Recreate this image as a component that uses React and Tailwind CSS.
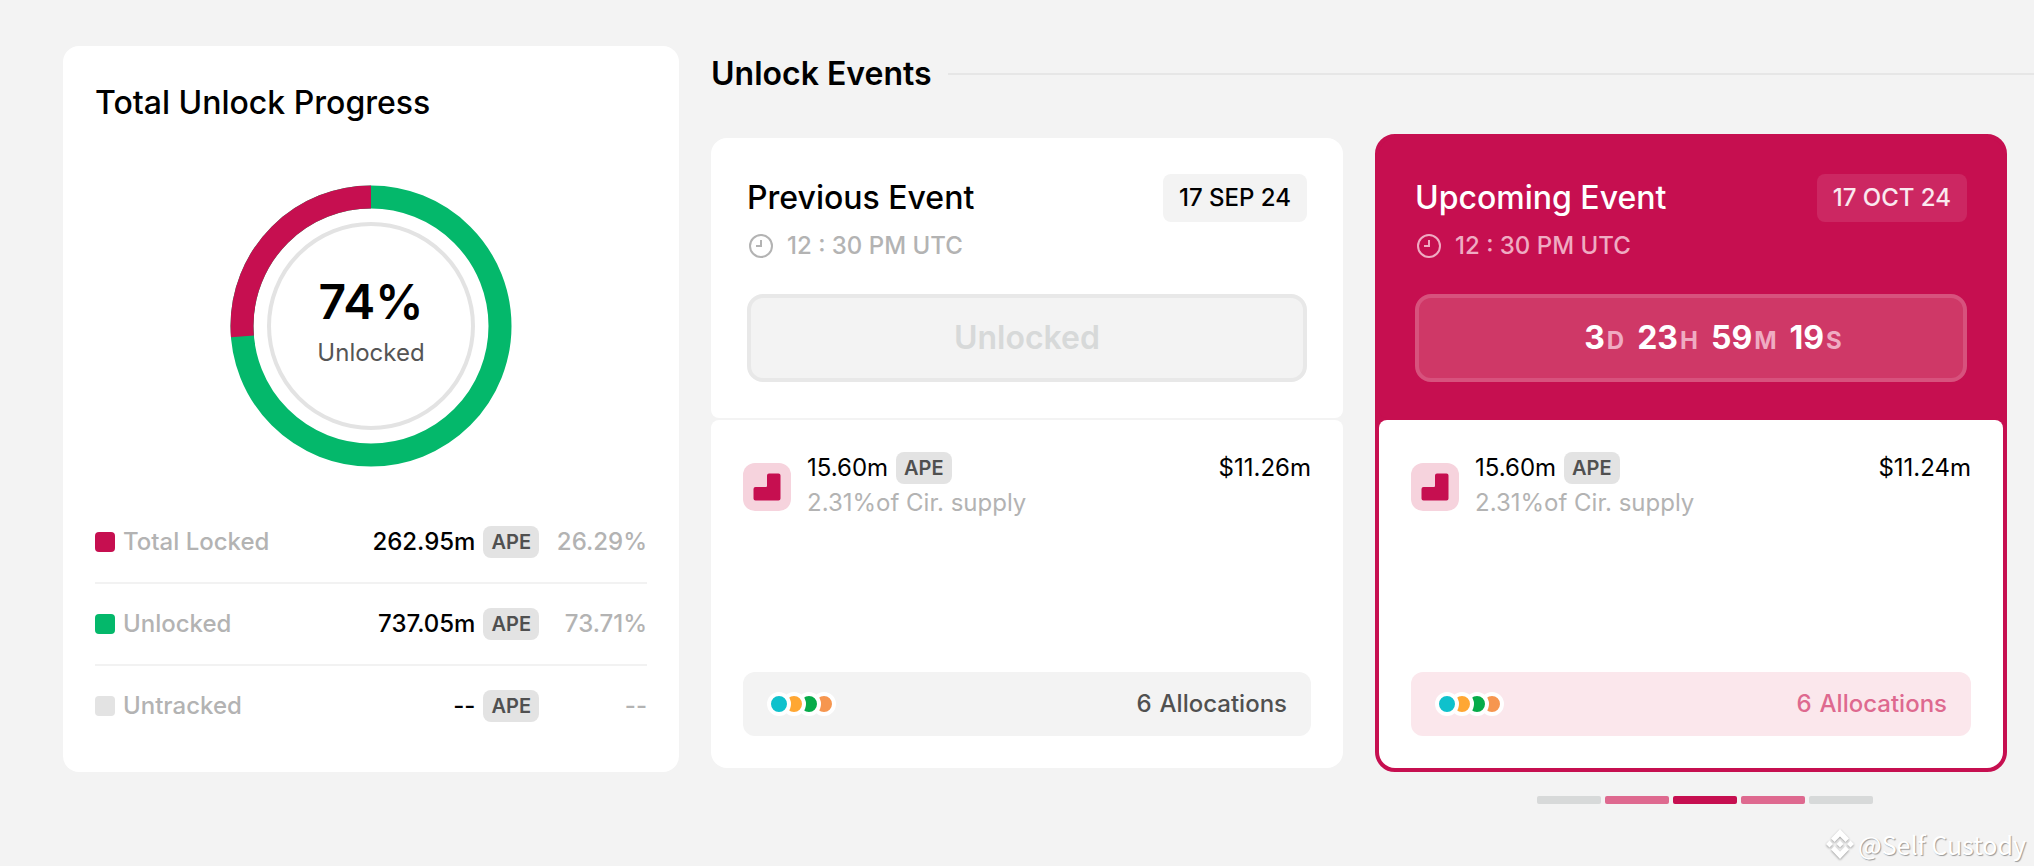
import clsx from "clsx";

const progressRows = [
  { label: "Total Locked", amount: "262.95m", share: "26.29%", swatch: "bg-[#c60f50]" },
  { label: "Unlocked", amount: "737.05m", share: "73.71%", swatch: "bg-[#04b86b]" },
  { label: "Untracked", amount: "--", share: "--", swatch: "bg-[#e3e3e3]" },
];

const countdown = [
  { value: "3", unit: "D" },
  { value: "23", unit: "H" },
  { value: "59", unit: "M" },
  { value: "19", unit: "S" },
];

const allocationDots = [
  "z-30 bg-[#0fc1cc]",
  "z-20 -ml-[9px] bg-[#ffa733]",
  "z-10 -ml-[9px] bg-[#06ab49]",
  "-ml-[9px] bg-[#f6964f]",
];

const pages = [
  "bg-[#d7d9d9]",
  "bg-[#de698f]",
  "bg-[#c60f50]",
  "bg-[#de698f]",
  "bg-[#d7d9d9]",
];

function TokenBadge() {
  return (
    <span className="inline-flex h-8 items-center rounded-lg bg-[#e3e3e3] px-2 text-[20px] font-semibold text-[#505050]">
      APE
    </span>
  );
}

function ClockIcon() {
  return (
    <svg width="28" height="28" viewBox="0 0 28 28" fill="none" stroke="currentColor" strokeWidth="2" aria-hidden="true">
      <circle cx="14" cy="14" r="11" />
      <path d="M14 8v6H9" />
    </svg>
  );
}

function AllocationIcon() {
  return (
    <svg width="48" height="48" viewBox="0 0 48 48" className="shrink-0" aria-hidden="true">
      <rect width="48" height="48" rx="12" fill="#f6d3dd" />
      <path
        d="M26 10.5h9.500a2 2 0 0 1 2 2v23a2 2 0 0 1-2 2h-23a2 2 0 0 1-2-2V26a2 2 0 0 1 2-2H23a1 1 0 0 0 1-1v-10.500a2 2 0 0 1 2-2z"
        fill="#c60f50"
      />
    </svg>
  );
}

function ProgressDonut({ unlocked }) {
  return (
    <div className="relative mx-auto h-[282px] w-[282px]">
      <svg viewBox="0 0 282 282" className="h-full w-full" fill="none" aria-hidden="true">
        <circle cx="141" cy="141" r="129" stroke="#04b86b" strokeWidth="23" />
        <circle
          cx="141"
          cy="141"
          r="129"
          stroke="#c60f50"
          strokeWidth="23"
          pathLength="100"
          strokeDasharray={`${100 - unlocked} ${unlocked}`}
          strokeDashoffset={-unlocked}
          transform="rotate(-90 141 141)"
        />
        <circle cx="141" cy="141" r="102" stroke="#e3e3e3" strokeWidth="4" />
      </svg>
      <div className="absolute inset-0 flex flex-col items-center justify-center pb-2">
        <p className="text-[48px] leading-[62px] font-semibold">{Math.round(unlocked)}%</p>
        <p className="text-[24px] leading-10 text-[#555555]">Unlocked</p>
      </div>
    </div>
  );
}

function ProgressCard() {
  return (
    <section className="rounded-2xl bg-white px-8 pt-8 pb-[26px]">
      <h2 className="text-[32px] leading-[50px] font-medium">Total Unlock Progress</h2>
      <div className="mt-[57px]">
        <ProgressDonut unlocked={73.71} />
      </div>
      <table className="mt-[35px] w-full border-separate border-spacing-0 text-[24px] font-medium">
        <tbody>
          {progressRows.map((row, index) => {
            const cell = clsx(
              "p-0",
              index < progressRows.length - 1 ? "h-[82px] border-b-2 border-[#f2f2f2]" : "h-20"
            );
            return (
              <tr key={row.label}>
                <th scope="row" className={clsx(cell, "text-left font-medium text-[#b3b3b3]")}>
                  <span className="flex items-center gap-2">
                    <span className={clsx("h-5 w-5 rounded", row.swatch)} />
                    {row.label}
                  </span>
                </th>
                <td className={cell}>
                  <span className="flex items-center justify-end gap-2">
                    {row.amount}
                    <TokenBadge />
                  </span>
                </td>
                <td className={clsx(cell, "w-[108px] text-right text-[#b3b3b3]")}>{row.share}</td>
              </tr>
            );
          })}
        </tbody>
      </table>
    </section>
  );
}

function EventHeader({ title, date, time, active, children }) {
  return (
    <div
      className={clsx(
        "rounded-t-2xl rounded-b-lg px-9 py-9",
        active ? "bg-[#c60f50] text-white" : "bg-white"
      )}
    >
      <div className="flex h-12 items-center justify-between">
        <h3 className="text-[32px] leading-[50px] font-medium">{title}</h3>
        <time
          className={clsx(
            "flex h-12 items-center rounded-lg px-4 text-[24px] font-medium",
            active ? "bg-white/10 text-white/90" : "bg-[#f3f3f3]"
          )}
        >
          {date}
        </time>
      </div>
      <p
        className={clsx(
          "mt-2 flex items-center gap-3 text-[24px] leading-8 font-medium",
          active ? "text-[#efabc2]" : "text-[#b3b3b3]"
        )}
      >
        <ClockIcon />
        {time}
      </p>
      {children}
    </div>
  );
}

function EventDetails({ price, active }) {
  return (
    <div className="mt-0.5 flex min-h-[348px] flex-col justify-between rounded-t-lg rounded-b-2xl bg-white p-8 text-[24px]">
      <div className="flex items-start justify-between">
        <div className="flex items-center gap-4">
          <AllocationIcon />
          <div>
            <p className="flex items-center gap-2 leading-8">
              15.60m
              <TokenBadge />
            </p>
            <p className="leading-[38px] text-[#b3b3b3]">2.31%of Cir. supply</p>
          </div>
        </div>
        <p className="leading-8">{price}</p>
      </div>
      <button
        type="button"
        className={clsx(
          "flex h-16 w-full items-center justify-between rounded-xl px-6 font-medium",
          active ? "bg-[#fbe7ec] text-[#de698f]" : "bg-[#f3f3f3] text-[#505050]"
        )}
      >
        <span className="isolate flex">
          {allocationDots.map((dot) => (
            <span key={dot} className={clsx("relative h-6 w-6 rounded-full border-4 border-white", dot)} />
          ))}
        </span>
        <span className="flex gap-2">
          <span>6</span>
          <span>Allocations</span>
        </span>
      </button>
    </div>
  );
}

function Watermark() {
  return (
    <div className="absolute right-2 bottom-1 flex items-center gap-1 font-['Noto_Sans_CJK_SC',sans-serif] text-[25px] leading-9 text-white [text-shadow:1px_1px_1px_#999]">
      <svg width="28" height="30" viewBox="0 0 28 30" fill="#fff" className="drop-shadow-[0_1px_1px_#999]" aria-hidden="true">
        <path d="M14 0l9 9.500-3.500 3.500-5.500-5.500-5.500 5.500L5 9.500z" />
        <path d="M14 30l9-9.500-3.500-3.500-5.500 5.500-5.500-5.500L5 20.500z" />
        <path d="M14 11.500l3.500 3.500-3.500 3.500-3.500-3.500z" />
        <path d="M3.500 11.500L7 15l-3.500 3.500L0 15zM24.500 11.500L28 15l-3.500 3.500L21 15z" />
      </svg>
      @Self Custody
    </div>
  );
}

export default function App() {
  return (
    <main className="relative min-h-screen overflow-hidden bg-[#f3f3f3] pt-[46px] pl-[63px] font-[Inter,sans-serif] text-black">
      <div className="grid grid-cols-[616fr_1323fr] items-start gap-8">
        <ProgressCard />

        <section>
          <div className="flex h-14 items-center gap-4">
            <h2 className="text-[32px] font-semibold">Unlock Events</h2>
            <div className="h-0.5 flex-1 bg-[#e6e6e6]" />
          </div>

          <div className="mt-8 grid grid-cols-2 gap-8 pr-[27px]">
            <article className="my-1">
              <EventHeader title="Previous Event" date="17 SEP 24" time="12 : 30 PM UTC">
                <button
                  type="button"
                  disabled
                  className="mt-8 h-[88px] w-full rounded-2xl border-4 border-[#e8e8e8] bg-[#f3f3f3] text-[32px] font-semibold text-[#d7d9d9]"
                >
                  Unlocked
                </button>
              </EventHeader>
              <EventDetails price="$11.26m" />
            </article>

            <article className="rounded-[20px] border-4 border-[#c60f50] bg-[#c60f50]">
              <EventHeader title="Upcoming Event" date="17 OCT 24" time="12 : 30 PM UTC" active>
                <div className="mt-8 flex h-[88px] items-center justify-center gap-[13px] rounded-2xl border-4 border-[#d7527d] bg-[#cf3867] pl-11">
                  {countdown.map(({ value, unit }) => (
                    <p key={unit} className="flex items-baseline gap-0.5 text-[32px] font-bold">
                      {value}
                      <span className="text-[24px] text-[#efabc2]">{unit}</span>
                    </p>
                  ))}
                </div>
              </EventHeader>
              <EventDetails price="$11.24m" active />
            </article>
          </div>

          <nav className="mt-6 ml-[50%] flex justify-center gap-1 pl-1" aria-label="Unlock events">
            {pages.map((page, index) => (
              <button
                key={index}
                type="button"
                aria-label={`Event ${index + 1}`}
                className={clsx("h-2 w-16 rounded-xs", page)}
              />
            ))}
          </nav>
        </section>
      </div>

      <Watermark />
    </main>
  );
}
